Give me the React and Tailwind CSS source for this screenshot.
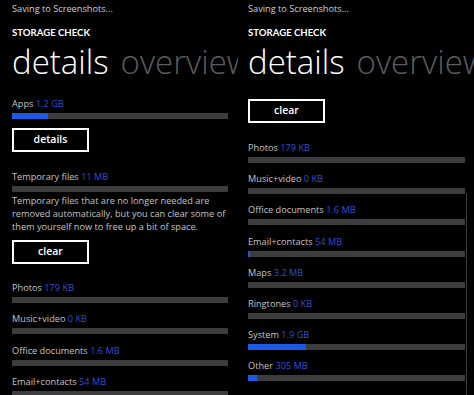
import React from "react";

const font = { fontFamily: '"Open Sans", "Noto Sans", sans-serif' };

function Bar({ fill = 0, className = "" }) {
  return (
    <div className={"h-[6px] bg-[#3d3d3d] " + className}>
      <div className="h-full bg-[#1b5ae4]" style={{ width: fill + "px" }} />
    </div>
  );
}

function Item({ label, value, fill, mt }) {
  return (
    <div className={mt}>
      <div className="h-[14px] text-[9.2px] leading-[14px] whitespace-nowrap text-[#c4c4c4]">
        {label} <span className="text-[#2f4fd0]">{value}</span>
      </div>
      <Bar fill={fill} className="mt-[2px]" />
    </div>
  );
}

function Button({ children, className = "" }) {
  return (
    <div
      className={
        "flex h-[24px] w-[77px] items-center justify-center border-2 border-white text-[10.5px] font-semibold text-white " +
        className
      }
    >
      {children}
    </div>
  );
}

function Header() {
  return (
    <>
      <div className="h-[18px] text-[9.2px] leading-[18px] text-[#cfcfcf] whitespace-nowrap">
        Saving to Screenshots...
      </div>
      <div
        className="mt-[6px] h-[18px] text-[9.6px] font-bold leading-[18px] text-white whitespace-nowrap"
        style={{ fontFamily: 'Lato, "Open Sans", sans-serif' }}
      >
        STORAGE CHECK
      </div>
      <div className="flex h-[40px] items-start gap-[12px] text-[33px] font-light leading-[40px] whitespace-nowrap">
        <span className="text-white">details</span>
        <span className="text-[#5c5c5c]">overview</span>
      </div>
    </>
  );
}

export default function App() {
  const right = [
    ["Photos", "179 KB", 0],
    ["Music+video", "0 KB", 0],
    ["Office documents", "1.6 MB", 0],
    ["Email+contacts", "54 MB", 2],
    ["Maps", "3.2 MB", 0],
    ["Ringtones", "0 KB", 0],
    ["System", "1.9 GB", 58],
    ["Other", "305 MB", 9],
  ];
  const leftBottom = [
    ["Photos", "179 KB", 0],
    ["Music+video", "0 KB", 0],
    ["Office documents", "1.6 MB", 0],
    ["Email+contacts", "54 MB", 0],
  ];
  return (
    <div className="flex h-[395px] w-[474px] overflow-hidden bg-black" style={font}>
      {/* left screen */}
      <div className="h-full w-[238px] shrink-0 overflow-hidden pl-[12px]">
        <div className="w-[216px]">
          <Header />
          <Item label="Apps" value="1.2 GB" fill={36} mt="mt-[15px]" />
          <Button className="mt-[9px]">details</Button>
          <Item label="Temporary files" value="11 MB" fill={0} mt="mt-[18px]" />
          <p className="mt-[2px] text-[9.2px] leading-[13px] whitespace-nowrap text-[#c4c4c4]">
            Temporary files that are no longer needed are
            <br />
            removed automatically, but you can clear some of
            <br />
            them yourself now to free up a bit of space.
          </p>
          <Button className="mt-[7px]">clear</Button>
          {leftBottom.map(([l, v, f], i) => (
            <Item key={l} label={l} value={v} fill={f} mt={i === 0 ? "mt-[17px]" : "mt-[9.3px]"} />
          ))}
        </div>
      </div>
      {/* right screen */}
      <div className="relative h-full w-[236px] shrink-0 overflow-hidden pl-[10px]">
        <div className="w-[217px]">
          <Header />
          <Button className="mt-[17px]">clear</Button>
          {right.map(([l, v, f], i) => (
            <Item key={l} label={l} value={v} fill={f} mt={i === 0 ? "mt-[18px]" : "mt-[9.2px]"} />
          ))}
        </div>
        <div className="absolute left-[228px] top-[193px] h-[202px] w-px bg-[#3a3a3a]" />
      </div>
    </div>
  );
}
